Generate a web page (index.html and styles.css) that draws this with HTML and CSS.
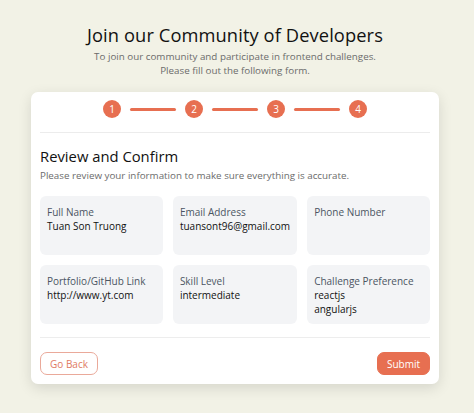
FILE: index.html
```html
<!DOCTYPE html>
<html lang="en">
<head>
<meta charset="utf-8">
<title>Join our Community of Developers</title>
<link rel="stylesheet" href="styles.css">
</head>
<body>
<main class="page">
  <header class="intro">
    <h1 class="title">Join our Community of Developers</h1>
    <p class="subtitle">To join our community and participate in frontend challenges.<br>Please fill out the following form.</p>
  </header>
  <section class="card">
    <div class="steps">
      <span class="step">1</span>
      <span class="bar"></span>
      <span class="step">2</span>
      <span class="bar"></span>
      <span class="step">3</span>
      <span class="bar"></span>
      <span class="step">4</span>
    </div>
    <div class="body">
      <h2 class="heading">Review and Confirm</h2>
      <p class="desc">Please review your information to make sure everything is accurate.</p>
      <div class="grid">
        <div class="field"><div class="label">Full Name</div><div class="value">Tuan Son Truong</div></div>
        <div class="field"><div class="label">Email Address</div><div class="value">tuansont96@gmail.com</div></div>
        <div class="field"><div class="label">Phone Number</div><div class="value"></div></div>
        <div class="field"><div class="label">Portfolio/GitHub Link</div><div class="value">http://www.yt.com</div></div>
        <div class="field"><div class="label">Skill Level</div><div class="value">intermediate</div></div>
        <div class="field"><div class="label">Challenge Preference</div><div class="value">reactjs<br>angularjs</div></div>
      </div>
    </div>
    <div class="actions">
      <button class="btn btn-back" type="button">Go Back</button>
      <button class="btn btn-submit" type="button">Submit</button>
    </div>
  </section>
</main>
</body>
</html>
```
FILE: styles.css
```css
* { box-sizing: border-box; }
html, body { margin: 0; padding: 0; }
body {
  background: #f2f2e6;
  font-family: "Open Sans", "Liberation Sans", sans-serif;
  color: #111;
  width: 474px;
  height: 413px;
  overflow: hidden;
}
.page {
  display: flex;
  flex-direction: column;
  align-items: center;
  padding-top: 21px;
  padding-right: 4px;
}
.intro { text-align: center; }
.title {
  margin: 0;
  font-size: 18.3px;
  line-height: 28px;
  font-weight: 400;
  color: #111;
  letter-spacing: 0.1px;
}
.subtitle {
  margin: 1px 0 0;
  font-size: 9.8px;
  line-height: 14px;
  color: #6b6b6b;
}
.card {
  margin-top: 14px;
  width: 408px;
  background: #fff;
  border-radius: 7px;
  box-shadow: 0 4px 14px rgba(0,0,0,0.12);
  padding: 8px 9px 9px;
}
.steps {
  display: flex;
  justify-content: center;
  align-items: center;
  gap: 9px;
  padding-bottom: 14px;
  border-bottom: 1px solid #ececec;
}
.step {
  width: 18px;
  height: 18px;
  border-radius: 50%;
  background: #e76f51;
  color: #fff;
  font-size: 10px;
  display: flex;
  align-items: center;
  justify-content: center;
}
.bar {
  width: 46px;
  height: 3px;
  border-radius: 2px;
  background: #e76f51;
}
.body { padding-top: 13px; padding-bottom: 13px; border-bottom: 1px solid #ededed; }
.heading {
  margin: 0;
  font-size: 14.8px;
  line-height: 20px;
  font-weight: 400;
  color: #111;
}
.desc {
  margin: 3px 0 0;
  font-size: 9.8px;
  line-height: 14px;
  color: #6b6b6b;
}
.grid {
  margin-top: 13px;
  display: grid;
  grid-template-columns: repeat(3, 1fr);
  gap: 10px;
}
.field {
  background: #f3f4f6;
  border-radius: 6px;
  height: 59px;
  padding: 9px 7px;
}
.label {
  font-size: 10px;
  line-height: 14px;
  color: #4b5563;
}
.value {
  font-size: 10px;
  line-height: 14px;
  font-weight: 500;
  color: #111;
}
.actions {
  display: flex;
  justify-content: space-between;
  align-items: center;
  padding-top: 14px;
}
.btn {
  font-family: inherit;
  font-size: 10px;
  border-radius: 7px;
  height: 23px;
  padding: 0 9px;
  cursor: pointer;
}
.btn-back {
  background: #fff;
  border: 1px solid #eaa99a;
  color: #e07a63;
}
.btn-submit {
  background: #e76f51;
  border: 1px solid #e76f51;
  color: #fff;
}
```
